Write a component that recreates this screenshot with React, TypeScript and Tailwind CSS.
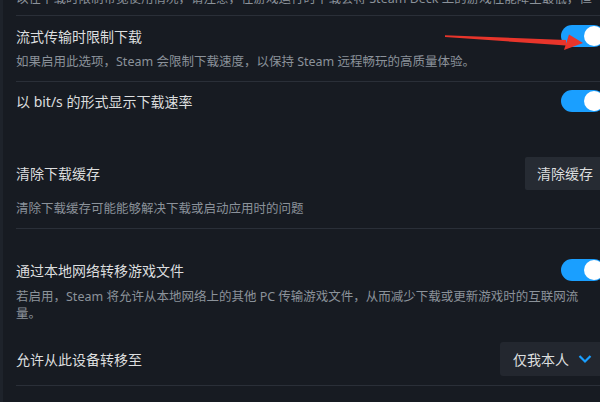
import React from "react";

const font = { fontFamily: '"Noto Sans", "Noto Sans CJK SC", sans-serif' };

function Toggle() {
  return (
    <div className="relative h-[22px] w-[44px] shrink-0 rounded-full bg-[#1a9fff]">
      <div className="absolute right-[1px] top-[1px] h-[20px] w-[20px] rounded-full bg-white" />
    </div>
  );
}

function Sep({ cls }: { cls: string }) {
  return <div className={`h-px bg-[#2a2f38] ${cls}`} />;
}

export default function App() {
  return (
    <div
      className="relative h-[402px] w-[600px] overflow-hidden border-l-[3px] border-[#1e232b] bg-[#171b22]"
      style={font}
    >
      <div className="ml-[13px] w-[589px]">
        <div className="flex h-[8px] items-end overflow-hidden">
          <p className="whitespace-nowrap text-[12.5px] leading-[18px] text-[#8b929a]">
            以在下载时限制带宽使用情况，请注意，在游戏运行时下载会将 Steam Deck 上的游戏性能降至最低，但一些游戏可能
          </p>
        </div>
        <Sep cls="mt-[7px]" />

        <div className="mt-[8px] flex h-[24px] items-center justify-between">
          <span className="text-[14px] text-[#dcdedf]">流式传输时限制下载</span>
          <Toggle />
        </div>
        <p className="mt-[5px] text-[12.5px] leading-[18px] text-[#8b929a]">
          如果启用此选项，Steam 会限制下载速度，以保持 Steam 远程畅玩的高质量体验。
        </p>
        <Sep cls="mt-[10px]" />

        <div className="mt-[7px] flex h-[24px] items-center justify-between">
          <span className="text-[14px] text-[#dcdedf]">以 bit/s 的形式显示下载速率</span>
          <Toggle />
        </div>

        <div className="mt-[44px] flex h-[33px] items-center justify-between">
          <span className="text-[14px] text-[#dcdedf]">清除下载缓存</span>
          <button className="flex h-[33px] items-center rounded-[2px] bg-[#262b33] px-[12px] text-[14px] text-[#dcdedf]">
            清除缓存
          </button>
        </div>
        <p className="mt-[10px] text-[12.5px] leading-[18px] text-[#8b929a]">
          清除下载缓存可能能够解决下载或启动应用时的问题
        </p>
        <Sep cls="mt-[10px]" />

        <div className="mt-[29px] flex h-[24px] items-center justify-between">
          <span className="text-[14px] text-[#dcdedf]">通过本地网络转移游戏文件</span>
          <Toggle />
        </div>
        <p className="mt-[6px] w-[580px] text-[12.5px] leading-[17px] text-[#8b929a]">
          若启用，Steam 将允许从本地网络上的其他 PC 传输游戏文件，从而减少下载或更新游戏时的互联网流量。
        </p>

        <div className="mt-[20px] flex h-[34px] items-center justify-between">
          <span className="text-[14px] text-[#dcdedf]">允许从此设备转移至</span>
          <div className="flex h-[34px] w-[105px] items-center rounded-[3px] bg-[#23272f] pl-[13px] text-[14px] text-[#dcdedf]">
            <span>仅我本人</span>
            <svg className="ml-[9px]" width="14" height="10" viewBox="0 0 14 10">
              <path d="M1.5 2 L7 7.5 L12.5 2" fill="none" stroke="#1a9fff" strokeWidth="2.2" />
            </svg>
          </div>
        </div>
        <Sep cls="mt-[9px]" />
      </div>

      <svg className="absolute left-0 top-0" width="600" height="402" viewBox="0 0 600 402">
        <polygon points="442,35.3 563,40 563,45.5 442,37" fill="#e8352b" />
        <polygon points="566,34.5 580,43 561,50" fill="#e8352b" />
      </svg>
    </div>
  );
}
